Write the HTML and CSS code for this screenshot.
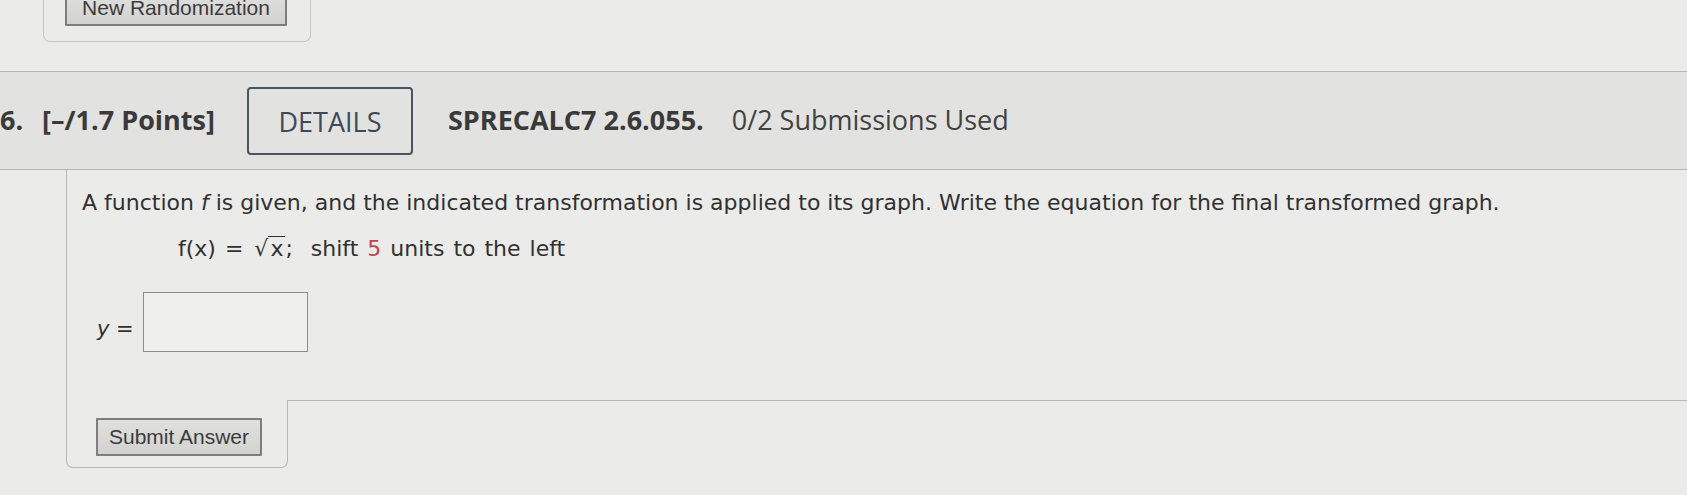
FILE: index.html
```html
<!DOCTYPE html>
<html lang="en">
<head>
<meta charset="utf-8">
<title>Question 6</title>
<link rel="stylesheet" href="styles.css">
</head>
<body>
<div class="top-box">
  <button class="btn rand-btn" type="button">New Randomization</button>
</div>

<div class="band">
  <span class="qnum">6.</span>
  <span class="points">[–/1.7 Points]</span>
  <button class="details" type="button">DETAILS</button>
  <span class="code">SPRECALC7 2.6.055.</span>
  <span class="subs">0/2 Submissions Used</span>
</div>

<div class="panel">
  <p class="prompt">A function <i>f</i> is given, and the indicated transformation is applied to its graph. Write the equation for the final transformed graph.</p>
  <div class="formula">f(x) = <span class="root">√<span class="radicand">x</span></span>;&nbsp; shift <span class="red">5</span> units to the left</div>
  <div class="answer-row">
    <span class="y-label"><i>y</i> =</span>
    <span class="answer-box"></span>
  </div>
</div>
<div class="submit-row">
  <div class="submit-box">
    <button class="btn submit-btn" type="button">Submit Answer</button>
  </div>
  <div class="submit-rest"></div>
</div>
</body>
</html>
```

FILE: styles.css
```css
html, body {
  margin: 0;
  padding: 0;
}
body {
  background: #ebebea;
  width: 1687px;
  height: 495px;
  overflow: hidden;
  color: #3a3a3a;
  font-family: "Open Sans", "Noto Sans", sans-serif;
}

.top-box {
  box-sizing: border-box;
  margin-left: 43px;
  width: 268px;
  height: 42px;
  border: 1px solid #c6c6c4;
  border-top: none;
  border-radius: 0 0 7px 7px;
  padding-left: 21px;
  overflow: hidden;
}
.btn {
  font-family: "Liberation Sans", Arial, sans-serif;
  font-size: 21px;
  color: #3c3c3c;
  background: linear-gradient(#e0e0df, #d2d2d1);
  border: 2px solid #7e7e7e;
  border-radius: 1px;
  padding: 0;
}
.rand-btn {
  display: block;
  margin-top: -10px;
  width: 222px;
  height: 36px;
  line-height: 30px;
}

.band {
  box-sizing: border-box;
  margin-top: 29px;
  height: 99px;
  background: #e2e2e1;
  border-top: 1px solid #b4b4b2;
  border-bottom: 1px solid #b4b4b2;
  display: flex;
  align-items: flex-start;
  padding-top: 15px;
  font-size: 27px;
}
.band > span {
  height: 66px;
  line-height: 66px;
}
.qnum {
  font-weight: 700;
  width: 42px;
}
.points {
  font-weight: 700;
  width: 205px;
}
.details {
  box-sizing: border-box;
  width: 166px;
  height: 68px;
  border: 2px solid #4b5561;
  border-radius: 4px;
  background: transparent;
  font-family: "Open Sans", "Noto Sans", sans-serif;
  font-size: 27px;
  font-weight: 500;
  color: #3e4a57;
  padding: 0;
  margin-right: 35px;
}
.code {
  font-weight: 700;
  margin-right: 28px;
}
.subs {
  font-weight: 400;
  color: #424242;
}

.panel {
  box-sizing: border-box;
  margin-left: 66px;
  height: 230px;
  border-left: 1px solid #b8b8b6;
  padding: 18px 0 0 15px;
  font-family: "DejaVu Sans", Verdana, sans-serif;
  color: #313131;
}
.prompt {
  margin: 0;
  font-size: 22px;
  line-height: 30px;
}
.formula {
  margin: 16px 0 0 96px;
  font-size: 22px;
  line-height: 30px;
  word-spacing: 2px;
}
.root {
  display: inline-block;
  line-height: 26px;
  margin-left: 2px;
}
.radicand {
  display: inline-block;
  border-top: 1.5px solid #313131;
  padding: 0 2px;
  line-height: 24px;
}
.red {
  color: #c4434a;
}
.answer-row {
  display: flex;
  align-items: center;
  margin: 28px 0 0 15px;
  font-size: 21px;
}
.y-label {
  width: 46px;
  padding-top: 14px;
}
.answer-box {
  box-sizing: border-box;
  width: 165px;
  height: 60px;
  border: 1.5px solid #8e8e8c;
  background: #efefee;
}

.submit-row {
  display: flex;
  margin-left: 66px;
}
.submit-box {
  box-sizing: border-box;
  width: 222px;
  height: 68px;
  border: 1px solid #b8b8b6;
  border-top: none;
  border-radius: 0 0 7px 7px;
  padding: 18px 0 0 29px;
}
.submit-btn {
  display: block;
  width: 166px;
  height: 38px;
  line-height: 34px;
}
.submit-rest {
  flex: 1;
  border-top: 1px solid #b8b8b6;
}
```
